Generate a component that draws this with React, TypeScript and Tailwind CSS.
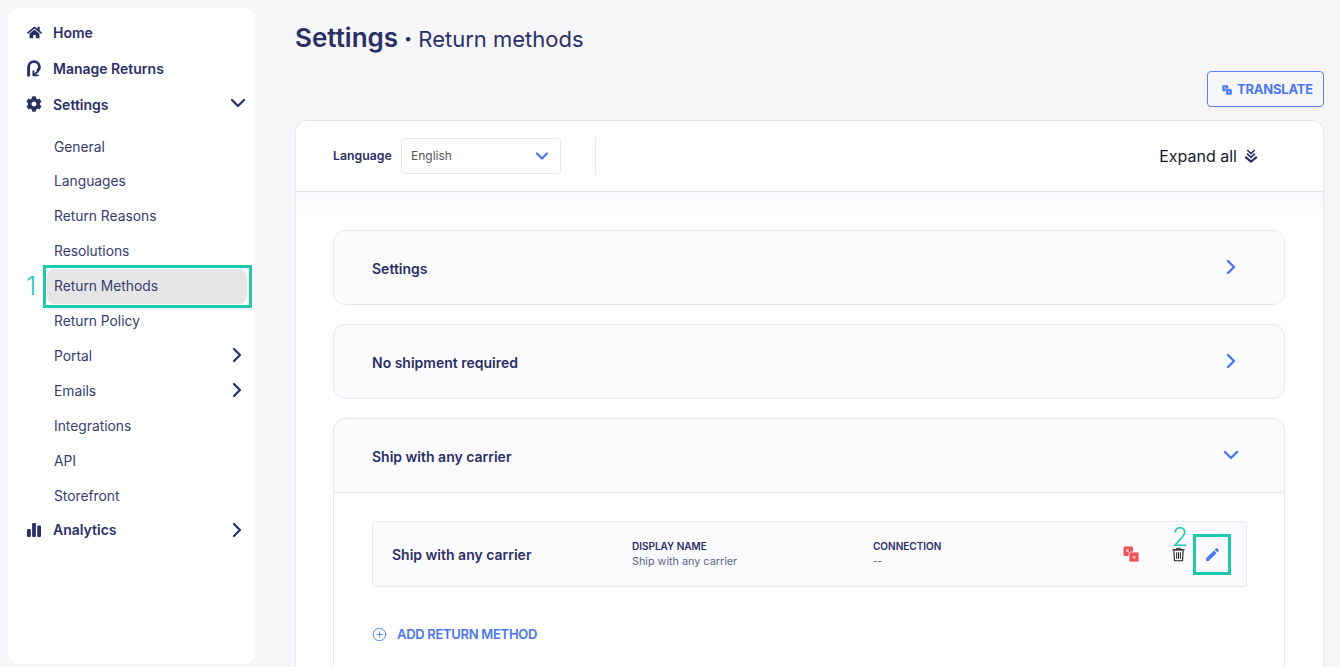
import { ChevronDown, ChevronRight, CirclePlus } from "lucide-react";
import { FaCog, FaHome } from "react-icons/fa";
import { MdEdit } from "react-icons/md";

const SUB_ITEMS = ["General", "Languages", "Return Reasons", "Resolutions", "Return Methods", "Return Policy", "Portal", "Emails", "Integrations", "API", "Storefront"];

function ReturnsIcon() {
  return (
    <svg viewBox="0 0 14 17" className="w-[14px] h-[17px]" fill="none" stroke="#2b2f66">
      <path d="M1.6 16.5V7a5.4 5.4 0 0 1 10.8 0c0 1.9-.9 3.2-2.4 4" strokeWidth={2.9} />
      <path d="M11.5 15.4H6.4V10.4" strokeWidth={1.9} />
      <path d="M6.8 15l4.6-4" strokeWidth={1.7} />
    </svg>
  );
}

function BarsIcon() {
  return (
    <svg viewBox="0 0 14 14" className="w-[14px] h-[14px]" fill="#2b2f66">
      <rect x="0" y="6" width="3.8" height="8" rx="1" />
      <rect x="5.1" y="0" width="3.8" height="14" rx="1" />
      <rect x="10.2" y="2.5" width="3.8" height="11.5" rx="1" />
    </svg>
  );
}

function ExpandIcon() {
  return (
    <svg viewBox="0 0 14 14" className="w-[14px] h-[14px]" fill="none" stroke="#2b2f66">
      <path d="M3.2 1l3.8 3.6L10.8 1" strokeWidth={1.6} />
      <path d="M3 4.6l4 3.8 4-3.8" strokeWidth={1.6} />
      <path d="M1.2 7.8L7 12.6l5.8-4.8" strokeWidth={2.2} />
    </svg>
  );
}

function TrashIcon() {
  return (
    <svg viewBox="0 0 14 15" className="w-[13px] h-[15px]" fill="none" stroke="#222">
      <path d="M5 1.9V.8h4v1.1" strokeWidth={1} />
      <path d="M.6 2.5h12.8" strokeWidth={1.6} />
      <path d="M2 3.6l.7 10.6h8.6L12 3.6" strokeWidth={1.2} />
      <path d="M5 5.2v7M7 5.2v7M9 5.2v7" strokeWidth={1.1} />
    </svg>
  );
}

function TranslateIcon({ color, size }: { color: string; size: number }) {
  return (
    <svg viewBox="0 0 16 16" width={size} height={size}>
      <rect x="0.5" y="0.5" width="9.5" height="9.5" rx="1.5" fill={color} />
      <rect x="6" y="6" width="10" height="10" rx="1.5" fill={color} stroke="#fff" strokeWidth="0.8" />
      <rect x="3" y="3" width="3" height="3" fill="#fff" opacity="0.6" />
      <rect x="9.7" y="9.7" width="2.8" height="2.8" fill="#fff" opacity="0.6" />
    </svg>
  );
}

function Sidebar() {
  return (
    <aside className="relative w-[247px] h-[656px] shrink-0 bg-white rounded-xl pt-[6px] pl-[15px] pr-[8px]">
      <div className="flex items-center h-9 text-[14px] font-semibold text-[#2b2f66]">
        <span className="w-[30px] pl-[4px]"><FaHome size={15} color="#2b2f66" /></span>Home
      </div>
      <div className="flex items-center h-9 text-[14px] font-semibold text-[#2b2f66]">
        <span className="w-[30px] pl-[4px]"><ReturnsIcon /></span>Manage Returns
      </div>
      <div className="flex items-center justify-between h-9 text-[14px] font-semibold text-[#2b2f66]">
        <span className="flex items-center"><span className="w-[30px] pl-[3px]"><FaCog size={16} color="#2b2f66" /></span>Settings</span>
        <ChevronDown size={24} strokeWidth={2.2} className="-mr-[3px] -mt-[2px]" />
      </div>
      <ul className="mt-[7.5px]">
        {SUB_ITEMS.map((item) => (
          <li
            key={item}
            className={`flex items-center justify-between h-[34.9px] text-[13.8px] text-[#383c70] ${item === "Return Methods" ? "bg-[#e6e6e6] rounded-lg ml-[24px] pl-[7px]" : "pl-[31px]"}`}
          >
            {item}
            {(item === "Portal" || item === "Emails") && <ChevronRight size={24} strokeWidth={2.2} className="-mr-[2px] -mt-[2px] text-[#2b2f66]" />}
          </li>
        ))}
      </ul>
      <div className="flex items-center justify-between h-9 text-[14px] font-semibold text-[#2b2f66] -mt-[1.5px]">
        <span className="flex items-center"><span className="w-[30px] pl-[4px]"><BarsIcon /></span>Analytics</span>
        <ChevronRight size={24} strokeWidth={2.2} className="-mr-[2px]" />
      </div>
      <div className="absolute left-[35px] top-[257px] w-[209px] h-[43px] border-[3px] border-[#1fc9ae]" />
      <span className="absolute left-[18px] top-[260px] text-[26px] leading-[36px] font-light text-[#1fc9ae]">1</span>
    </aside>
  );
}

function Accordion({ title, open }: { title: string; open?: boolean }) {
  return (
    <div className={`flex items-center justify-between h-[75px] px-[38px] bg-[#fbfbfd] border border-[#e6e7f5] ${open ? "rounded-t-xl" : "rounded-xl"}`}>
      <span className="pt-[1px] text-[14px] font-semibold text-[#2b2f66]">{title}</span>
      {open
        ? <ChevronDown size={24} strokeWidth={2.4} className="text-[#4a76f0] mr-[3px] -mt-[2px]" />
        : <ChevronRight size={24} strokeWidth={2.4} className="text-[#4a76f0] mr-[3px] -mt-[1px]" />}
    </div>
  );
}

export default function App() {
  return (
    <div className="flex h-[667px] w-[1340px] overflow-hidden bg-[#f6f6f8] pt-[8px] pl-[8px] font-['Inter',sans-serif]">
      <Sidebar />
      <main className="ml-[40px] w-[1029px]">
        <div className="flex items-baseline h-[63px] pt-[10px] text-[#2b2f66]">
          <span className="text-[26px] font-semibold">Settings</span>
          <span className="mx-[6px] text-[22px] font-black">·</span>
          <span className="text-[22px]">Return methods</span>
        </div>
        <div className="flex justify-end">
          <button className="flex items-center justify-center gap-[5px] w-[117px] h-[36px] pl-[4px] pt-[1px] border-[1.5px] border-[#5b84f2] rounded text-[13px] tracking-[-0.2px] font-bold text-[#4a76f0]">
            <TranslateIcon color="#4a76f0" size={10} />TRANSLATE
          </button>
        </div>
        <section className="mt-[13px] bg-white rounded-t-xl border border-[#e6e7f5] border-b-0 h-[560px]">
          <div className="flex items-center h-[71px] pl-[37px] pr-[65px] border-b border-[#e6e7f5]">
            <span className="w-[68px] text-[12.3px] font-semibold text-[#2b2f66]">Language</span>
            <div className="flex items-center justify-between w-[160px] h-[36px] px-[9px] border border-[#e6e7f5] rounded-sm text-[12px] text-[#555]">
              English<ChevronDown size={20} strokeWidth={2.6} className="text-[#4a76f0] -mr-[1px]" />
            </div>
            <div className="ml-[34px] w-px h-[38px] bg-[#e6e7f5]" />
            <div className="ml-auto flex items-center gap-[7px] text-[16px] text-[#1a1a2a]">
              Expand all<ExpandIcon />
            </div>
          </div>
          <div className="pl-[37px] pr-[38px] pt-[38px] bg-gradient-to-b from-[#f8f8fc] to-white to-[24px]">
            <Accordion title="Settings" />
            <div className="h-[19px]" />
            <Accordion title="No shipment required" />
            <div className="h-[19px]" />
            <Accordion title="Ship with any carrier" open />
            <div className="border-x border-[#e6e7f5] pl-[38px] pr-[37px] pt-[28px] h-[200px]">
              <div className="relative flex items-center h-[66px] bg-[#fbfbfd] border border-[#e6e7f5] rounded pl-[19px]">
                <span className="w-[240px] text-[14px] font-semibold text-[#2b2f66]">Ship with any carrier</span>
                <div className="w-[241px] text-[10px] leading-[15px]">
                  <div className="font-semibold text-[#2b2f66]">DISPLAY NAME</div>
                  <div className="text-[10.8px] text-[#5a5d85]">Ship with any carrier</div>
                </div>
                <div className="text-[10px] leading-[15px]">
                  <div className="font-semibold text-[#2b2f66]">CONNECTION</div>
                  <div className="text-[#5a5d85]">--</div>
                </div>
                <div className="ml-auto flex items-center">
                  <TranslateIcon color="#f44f55" size={16} />
                  <span className="ml-[33px]"><TrashIcon /></span>
                  <span className="flex items-center justify-center ml-[8px] mr-[15px] w-[38px] h-[41px] border-[3px] border-[#1fc9ae]">
                    <MdEdit size={17} color="#4a76f0" />
                  </span>
                </div>
                <span className="absolute right-[58px] top-[1px] text-[26px] leading-[28px] font-light text-[#1fc9ae]">2</span>
              </div>
              <div className="flex items-center gap-[10px] mt-[38px] text-[13px] tracking-[-0.3px] font-semibold text-[#4a76f0]">
                <CirclePlus size={15} strokeWidth={1.4} />ADD RETURN METHOD
              </div>
            </div>
          </div>
        </section>
      </main>
    </div>
  );
}
